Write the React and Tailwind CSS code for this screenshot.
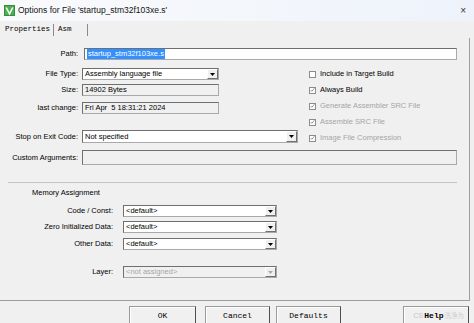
const sans = "font-['Liberation_Sans',Arial,sans-serif]"
const mono = "font-['Liberation_Mono','Courier_New',monospace]"

const sunken =
  'relative flex items-center border border-[#a9a9a9] border-t-[#6f6f6f] border-l-[#6f6f6f] pl-[2px]'

function DropButton({ disabled }) {
  return (
    <span className="absolute right-0 top-0 flex h-full w-[11px] items-center justify-center border border-t-white border-l-white border-b-[#707070] border-r-[#707070] bg-[#f0f0f0]">
      <svg width="5" height="3" viewBox="0 0 5 3">
        <path d="M0 0 H5 L2.5 3 Z" fill={disabled ? '#a8a8a8' : '#000'} />
      </svg>
    </span>
  )
}

function Check({ checked, disabled, label }) {
  return (
    <div className="flex h-[16px] items-center">
      <span className="flex h-[7px] w-[7px] items-center justify-center border border-[#8c8c8c] bg-white">
        {checked && (
          <svg width="6" height="6" viewBox="0 0 6 6">
            <path d="M0.8 3 L2.3 4.6 L5.3 1" fill="none" stroke="#8a8a8a" strokeWidth="1.1" />
          </svg>
        )}
      </span>
      <span className={`ml-[4px] ${disabled ? 'text-[#a6a6a6]' : 'text-black'}`}>{label}</span>
    </div>
  )
}

function Row({ label, className = '', labelWidth = 'w-[80px]', children }) {
  return (
    <div className={`flex items-center ${className}`}>
      <span className={`${labelWidth} shrink-0 pr-[2px] text-right`}>{label}</span>
      {children}
    </div>
  )
}

function Btn({ className = '', children }) {
  return (
    <button
      type="button"
      className={`relative flex h-[19px] items-center justify-center border border-[#9a9a9a] border-b-[#4f4f4f] border-r-[#4f4f4f] bg-[#f0f0f0] text-[8px] text-black shadow-[inset_1px_1px_0_#ffffff] ${mono} ${className}`}
    >
      {children}
    </button>
  )
}

export default function App() {
  return (
    <div className={`flex h-[323px] w-[474px] flex-col overflow-hidden bg-[#f0f0f0] text-[7.5px] leading-none text-black ${sans}`}>
      {/* title bar */}
      <div className="flex h-[21px] shrink-0 items-center bg-gradient-to-r from-[#f9fafc] to-[#eef3fb]">
        <svg className="ml-[4px]" width="11" height="11" viewBox="0 0 11 11">
          <rect width="11" height="11" fill="#2f8f3a" />
          <rect x="1" y="1" width="9" height="9" fill="#4caf50" />
          <path d="M2.2 2.5 L5.5 8.8 L8.8 2.5" fill="none" stroke="#fff" strokeWidth="1.6" />
        </svg>
        <span className="ml-[3px] text-[8.5px] text-[#111]">Options for File 'startup_stm32f103xe.s'</span>
        <span className="ml-auto mr-[8px] text-[10px] text-[#333]">×</span>
      </div>

      {/* tabs */}
      <div className={`flex h-[17px] shrink-0 items-center text-[7.5px] ${mono}`}>
        <span className="pl-[5px] pr-[3px]">Properties</span>
        <span className="h-[12px] border-l border-[#8a8a8a]" />
        <span className="w-[33px] pl-[4px]">Asm</span>
        <span className="h-[12px] border-l border-[#8a8a8a]" />
      </div>

      {/* panel */}
      <div className="h-[263px] w-[470px] shrink-0 border-r border-b border-r-[#9d9d9d] border-b-[#9d9d9d]">
        <Row label="Path:" className="mt-[10px] h-[12px]">
          <div className={`${sunken} ml-[4px] h-[12px] w-[373px] bg-white`}>
            <span className="bg-[#3390ff] px-px py-[1px] text-white">startup_stm32f103xe.s</span>
          </div>
        </Row>

        <div className="mt-[6px] flex">
          <div className="w-[300px]">
            <Row label="File Type:" className="mt-[2px] h-[12px]">
              <div className={`${sunken} ml-[2px] h-[12px] w-[137px] bg-white`}>
                Assembly language file
                <DropButton />
              </div>
            </Row>
            <Row label="Size:" className="mt-[4px] h-[12px]">
              <div className={`${sunken} ml-[2px] h-[12px] w-[137px] bg-[#f0f0f0]`}>14902 Bytes</div>
            </Row>
            <Row label="last change:" className="mt-[6px] h-[12px]">
              <div className={`${sunken} ml-[2px] h-[12px] w-[137px] bg-[#f0f0f0]`}>Fri Apr&nbsp; 5 18:31:21 2024</div>
            </Row>
            <Row label="Stop on Exit Code:" className="mt-[16px] h-[13px]">
              <div className={`${sunken} ml-[2px] h-[13px] w-[216px] bg-white`}>
                Not specified
                <DropButton />
              </div>
            </Row>
          </div>
          <div className="ml-[9px]">
            <Check label="Include in Target Build" />
            <Check label="Always Build" checked />
            <Check label="Generate Assembler SRC File" checked disabled />
            <Check label="Assemble SRC File" checked disabled />
            <Check label="Image File Compression" checked disabled />
          </div>
        </div>

        <Row label="Custom Arguments:" className="mt-[4px] h-[15px]">
          <div className={`${sunken} ml-[2px] h-[15px] w-[375px] bg-[#f0f0f0]`} />
        </Row>

        <div className="ml-[8px] mt-[17px] w-[449px] border-t border-[#c4c4c4]" />

        <div className="mt-[5px] flex h-[10px] items-center pl-[32px]">Memory Assignment</div>

        <Row label="Code / Const:" labelWidth="w-[115px]" className="mt-[7px] h-[12px]">
          <div className={`${sunken} ml-[8px] h-[12px] w-[154px] bg-white`}>
            &lt;default&gt;
            <DropButton />
          </div>
        </Row>
        <Row label="Zero Initialized Data:" labelWidth="w-[115px]" className="mt-[4px] h-[12px]">
          <div className={`${sunken} ml-[8px] h-[12px] w-[154px] bg-white`}>
            &lt;default&gt;
            <DropButton />
          </div>
        </Row>
        <Row label="Other Data:" labelWidth="w-[115px]" className="mt-[5px] h-[12px]">
          <div className={`${sunken} ml-[8px] h-[12px] w-[154px] bg-white`}>
            &lt;default&gt;
            <DropButton />
          </div>
        </Row>
        <Row label="Layer:" labelWidth="w-[115px]" className="mt-[16px] h-[12px]">
          <div className={`${sunken} ml-[8px] h-[12px] w-[154px] bg-[#f0f0f0] text-[#a6a6a6]`}>
            &lt;not assigned&gt;
            <DropButton disabled />
          </div>
        </Row>
      </div>

      {/* buttons */}
      <div className="mt-[5px] flex shrink-0">
        <Btn className="ml-[129px] w-[67px]">OK</Btn>
        <Btn className="ml-[9px] w-[65px]">Cancel</Btn>
        <Btn className="ml-[6px] w-[65px]">Defaults</Btn>
        <Btn className="ml-[62px] w-[66px] justify-end pr-[4px]">
          <span className={`mr-px text-[7px] text-[#c4c4c4] ${sans}`}>CS</span>
          <span className="font-bold">Help</span>
          <span className="ml-px font-['Noto_Sans_CJK_SC',sans-serif] text-[6.5px] text-[#cfcfcf]">洗净为</span>
        </Btn>
      </div>
    </div>
  )
}
